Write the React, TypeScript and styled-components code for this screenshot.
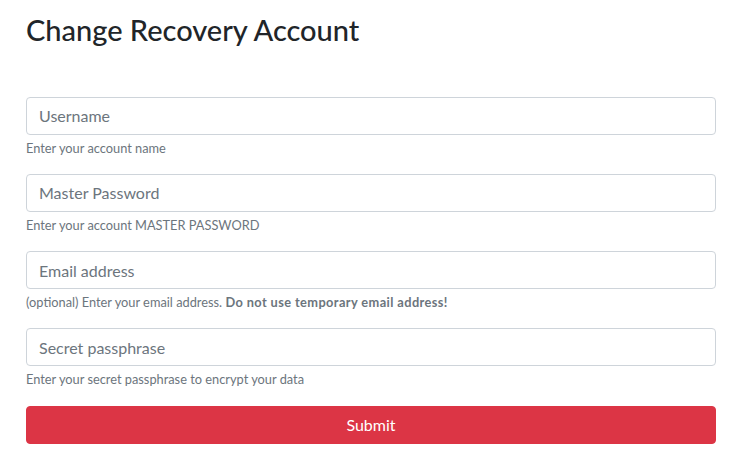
import React from "react";
import styled, { createGlobalStyle } from "styled-components";

const GlobalStyle = createGlobalStyle`
  html, body {
    margin: 0;
    padding: 0;
    background: #ffffff;
  }
  body {
    font-family: Lato, "Noto Sans", Arial, sans-serif;
    font-size: 16px;
    line-height: 1.5;
    color: #212529;
  }
  *, *::before, *::after {
    box-sizing: border-box;
  }
`;

type Field = {
  name: string;
  type: string;
  placeholder: string;
  help: React.ReactNode;
};

const fields: Field[] = [
  {
    name: "username",
    type: "text",
    placeholder: "Username",
    help: "Enter your account name",
  },
  {
    name: "password",
    type: "password",
    placeholder: "Master Password",
    help: "Enter your account MASTER PASSWORD",
  },
  {
    name: "email",
    type: "email",
    placeholder: "Email address",
    help: (
      <>
        (optional) Enter your email address.{" "}
        <b>Do not use temporary email address!</b>
      </>
    ),
  },
  {
    name: "passphrase",
    type: "password",
    placeholder: "Secret passphrase",
    help: "Enter your secret passphrase to encrypt your data",
  },
];

export default function App() {
  return (
    <>
      <GlobalStyle />
      <Page>
        <Title>Change Recovery Account</Title>
        <Form onSubmit={(e) => e.preventDefault()}>
          {fields.map((field) => (
            <FormGroup key={field.name}>
              <Input
                name={field.name}
                type={field.type}
                placeholder={field.placeholder}
              />
              <HelpText>{field.help}</HelpText>
            </FormGroup>
          ))}
          <SubmitButton type="submit">Submit</SubmitButton>
        </Form>
        <Divider />
      </Page>
    </>
  );
}

const Page = styled.div`
  padding: 13px 19px 0 26px;
`;

const Title = styled.h2`
  font-size: 29px;
  font-weight: 500;
  line-height: 1.2;
  margin: 0 0 49px;
  color: #212529;
`;

const Form = styled.form`
  display: flex;
  flex-direction: column;
`;

const FormGroup = styled.div`
  margin-bottom: 16px;
`;

const Input = styled.input`
  display: block;
  width: 100%;
  height: 38px;
  padding: 6px 12px;
  font-family: inherit;
  font-size: 16px;
  line-height: 1.5;
  color: #495057;
  background: #ffffff;
  border: 1px solid #ced4da;
  border-radius: 4px;
  outline: none;

  &::placeholder {
    color: #6c757d;
    opacity: 1;
  }
`;

const HelpText = styled.small`
  display: block;
  margin-top: 4px;
  font-size: 12.8px;
  line-height: 1.5;
  color: #6c757d;

  b {
    font-weight: 700;
    letter-spacing: 0.4px;
  }
`;

const SubmitButton = styled.button`
  display: block;
  width: 100%;
  height: 38px;
  padding: 6px 12px;
  font-family: inherit;
  font-size: 16px;
  line-height: 1.5;
  color: #ffffff;
  background: #dc3545;
  border: 1px solid #dc3545;
  border-radius: 4px;
  cursor: pointer;
`;

const Divider = styled.hr`
  margin: 16px 0 0;
  border: 0;
  border-top: 1px solid rgba(0, 0, 0, 0.1);
`;
